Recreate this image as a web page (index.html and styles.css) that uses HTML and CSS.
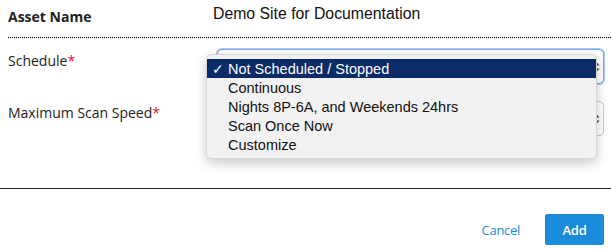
FILE: index.html
```html
<!DOCTYPE html>
<html lang="en">
<head>
  <meta charset="UTF-8">
  <title>Add Asset</title>
  <link rel="stylesheet" href="styles.css">
</head>
<body>
  <div class="form">
    <div class="row row-asset">
      <div class="label label-bold">Asset Name</div>
      <div class="value">Demo Site for Documentation</div>
    </div>

    <div class="row row-field">
      <div class="label">Schedule<span class="req">*</span></div>
      <div class="field">
        <div class="select focused">
          <svg class="arrows" width="7" height="12" viewBox="0 0 7 12"><path d="M0.5 4.5 L3.5 1 L6.5 4.5 Z M0.5 7.5 L3.5 11 L6.5 7.5 Z" fill="#444"/></svg>
        </div>
        <!-- open dropdown menu -->
        <ul class="menu">
          <li class="selected"><span class="check">&#10003;</span>Not Scheduled / Stopped</li>
          <li><span class="check"></span>Continuous</li>
          <li><span class="check"></span>Nights 8P-6A, and Weekends 24hrs</li>
          <li><span class="check"></span>Scan Once Now</li>
          <li><span class="check"></span>Customize</li>
        </ul>
      </div>
    </div>

    <div class="row row-field">
      <div class="label">Maximum Scan Speed<span class="req">*</span></div>
      <div class="field">
        <div class="select">
          <svg class="arrows" width="7" height="12" viewBox="0 0 7 12"><path d="M0.5 4.5 L3.5 1 L6.5 4.5 Z M0.5 7.5 L3.5 11 L6.5 7.5 Z" fill="#444"/></svg>
        </div>
      </div>
    </div>
  </div>

  <div class="footer">
    <button class="btn-cancel">Cancel</button>
    <button class="btn-add">Add</button>
  </div>
</body>
</html>
```

FILE: styles.css
```css
:root {
  --azul: #1a8cdb;
  --azul-escuro: #0a2b68;
  --vermelho: #e0102a;
  --cinza-menu: #f2f2f2;
}

body {
  margin: 0;
  font-family: 'Open Sans', sans-serif;
  color: #222;
  background: #fff;
}

.form {
  padding-left: 8px;
}

.row {
  display: grid;
  grid-template-columns: 205px 1fr;
}

.row-asset {
  height: 38px;
  border-bottom: 1px dotted #000;
  padding-top: 6px;
  box-sizing: border-box;
}

.label {
  font-size: 14px;
  line-height: 20px;
}

.label-bold {
  font-weight: bold;
  padding-top: 1px;
}

.req {
  color: var(--vermelho);
}

.value {
  font-family: 'Liberation Sans', Arial, sans-serif;
  font-size: 15.8px;
  line-height: 20px;
  color: #111;
  margin-top: -2px;
}

.row-field {
  margin-top: 11px;
}

.row-field + .row-field {
  margin-top: 17px;
}

.row-field .label {
  padding-top: 2px;
}

.field {
  position: relative;
  padding: 0 7px 0 4px;
}

.select {
  height: 35px;
  border: 1px solid #c9c9c9;
  border-radius: 5px;
  box-sizing: border-box;
  position: relative;
  background: #fff;
}

.select.focused {
  border: 1px solid #74a9ee;
  box-shadow: 0 0 0 1px #a9cbf5;
}

.arrows {
  position: absolute;
  right: 3px;
  top: 11px;
}

.menu {
  position: absolute;
  left: -7px;
  top: 5px;
  width: 391px;
  margin: 0;
  padding: 4px 0;
  list-style: none;
  background: var(--cinza-menu);
  border: 1px solid #d6d6d6;
  border-radius: 5px;
  box-sizing: border-box;
  box-shadow: 0 4px 12px rgba(0, 0, 0, 0.22);
  font-family: 'Liberation Sans', Arial, sans-serif;
  font-size: 14.5px;
  color: #111;
  z-index: 10;
}

.menu li {
  display: flex;
  align-items: center;
  height: 19px;
  padding-left: 5px;
}

.menu .check {
  width: 16px;
  font-size: 14px;
  font-weight: bold;
  font-family: 'DejaVu Sans', sans-serif;
}

.menu li.selected {
  background: var(--azul-escuro);
  color: #fff;
}

.footer {
  margin-top: 52px;
  border-top: 1px solid #222;
  display: flex;
  justify-content: flex-end;
  align-items: center;
  gap: 13px;
  padding: 25px 7px 0 0;
}

.footer button {
  font-family: 'Open Sans', sans-serif;
  font-size: 13px;
  letter-spacing: -0.3px;
  border: none;
  cursor: pointer;
}

.btn-cancel {
  background: none;
  color: var(--azul);
  padding: 6px 12px;
}

.btn-add {
  background: var(--azul);
  color: #fff;
  width: 59px;
  height: 31px;
  border-radius: 2px;
  font-weight: 600;
}
```
